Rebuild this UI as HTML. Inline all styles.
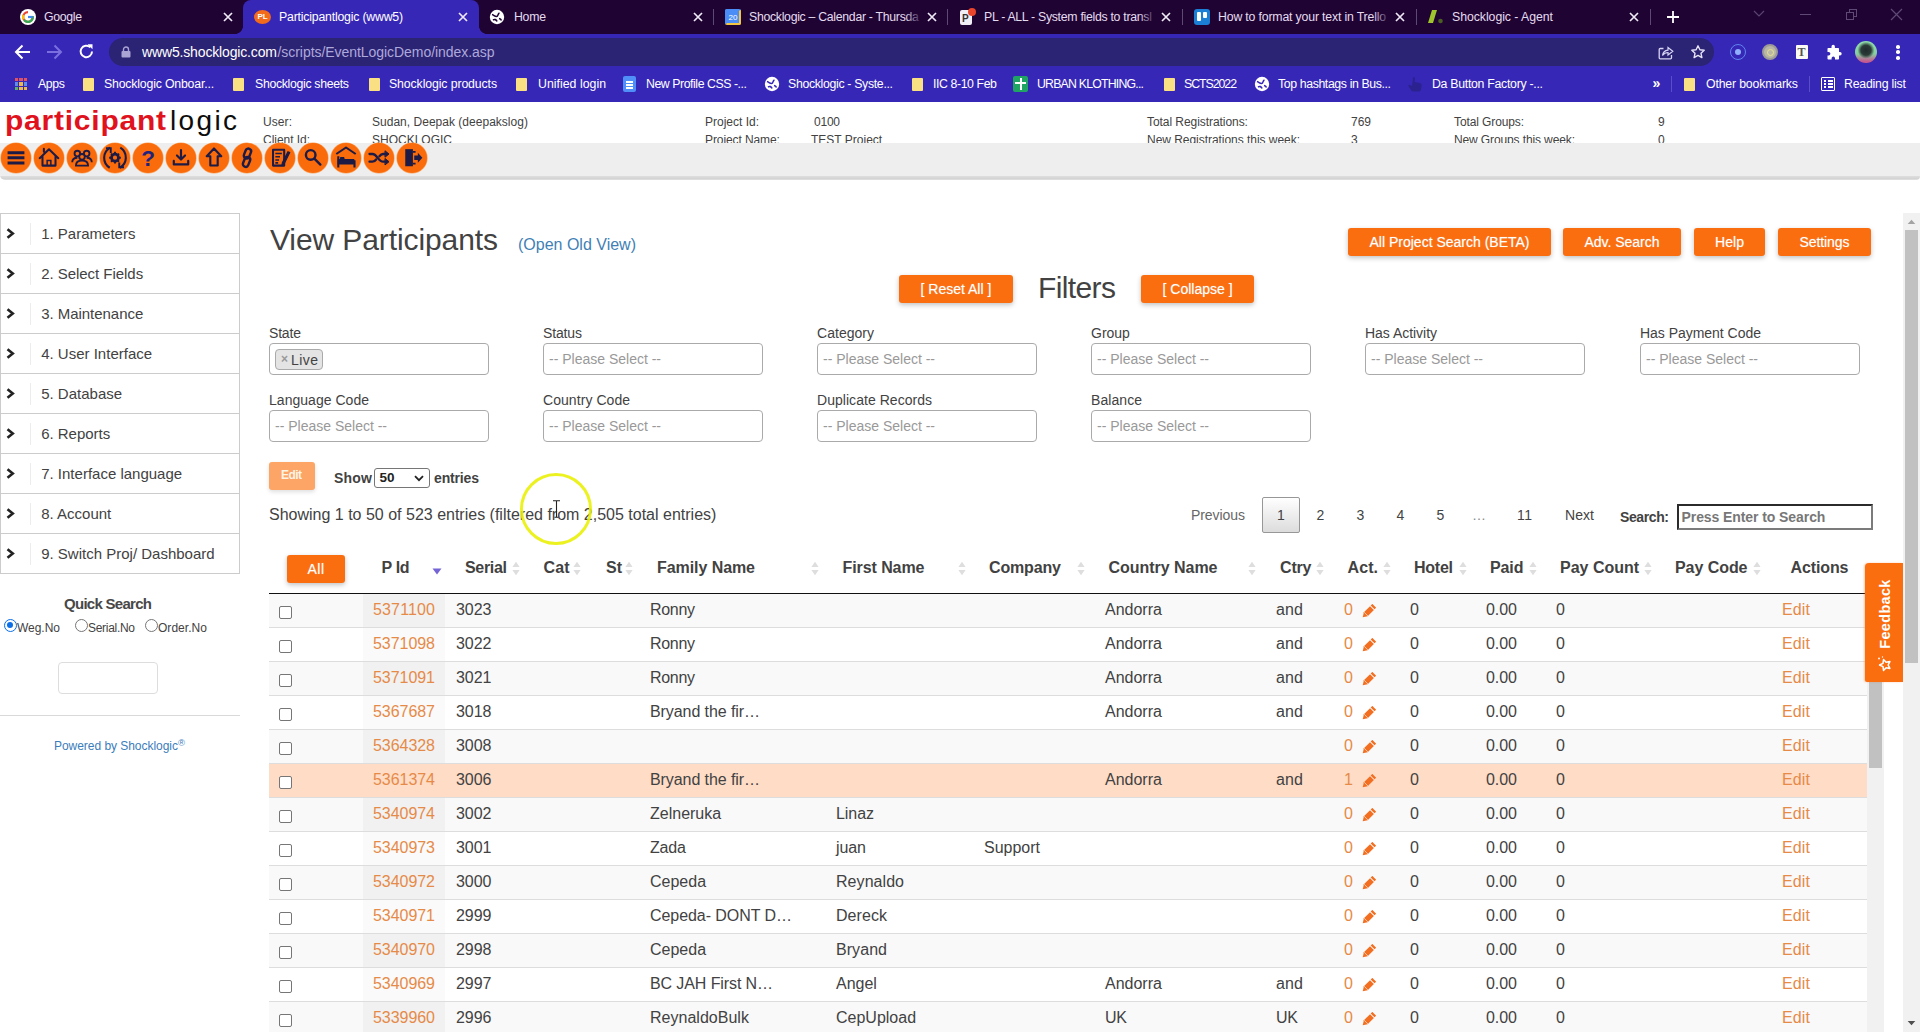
<!DOCTYPE html>
<html lang="en">
<head>
<meta charset="utf-8">
<title>Participantlogic (www5)</title>
<style>
*{box-sizing:border-box;margin:0;padding:0}
html,body{width:1920px;height:1032px;overflow:hidden;background:#fff}
body{font-family:"Liberation Sans",Arial,sans-serif;color:#333;position:relative}
.abs{position:absolute}
.t{position:absolute;white-space:nowrap;display:block}
/* browser chrome */
#tabbar{position:absolute;left:0;top:0;width:1920px;height:34px;background:#1f0333}
.atab{position:absolute;left:243px;top:0;width:236px;height:34px;background:#3727b7;border-radius:8px 8px 0 0}
#toolbar{position:absolute;left:0;top:34px;width:1920px;height:68px;background:#3727b7}
.tsep{position:absolute;top:9px;width:1px;height:16px;background:#5d4a73}
.fav{position:absolute;top:9px;width:16px;height:16px;border-radius:50%}
#omni{position:absolute;left:109px;top:4px;width:1605px;height:28px;border-radius:14px;background:#2b2373}
.fold{position:absolute;top:44px;width:11px;height:13px;background:#fbe083;border-radius:1px}
/* app header */
#hdr{position:absolute;left:0;top:102px;width:1920px;height:41px;background:#fff;overflow:hidden}
#iconbar{position:absolute;left:0;top:143px;width:1920px;height:37px;background:linear-gradient(#eee 0,#eee 33px,#dcdcdc 33.5px,#d2d2d2 36px,#e8e8e8 37px);border-radius:0 0 4px 5px}
.ic{position:absolute;top:0;width:30px;height:30px;border-radius:50%;background:#f96b0b;box-shadow:0 0 0 .6px #fca562}
.ic svg{position:absolute;left:0;top:0;width:30px;height:30px}
/* sidebar */
#side{position:absolute;left:0;top:213px;width:240px;height:361px;border-top:1px solid #ccc;border-right:1px solid #ccc;border-left:1px solid #ccc}
.si{position:absolute;left:0;width:238px;height:40px;border-bottom:1px solid #ccc}
.si .chev{position:absolute;left:5px;top:14px}
.si i{position:absolute;left:29px;top:9px;width:1px;height:22px;background:#ececec}
.rad{position:absolute;width:13px;height:13px;border-radius:50%;border:1px solid #767676;background:#fff}
.rad.on{border:1.500px solid #0a6fe8}
.rad.on:after{content:"";position:absolute;left:2px;top:2px;width:6px;height:6px;border-radius:50%;background:#0a6fe8}
/* main */
.btn{position:absolute;border-radius:3px;box-shadow:0 2px 5px rgba(0,0,0,.24)}
.bt{text-shadow:0 0 1px rgba(255,255,255,.5)}
.sel{position:absolute;width:220px;height:32px;border:1px solid #aaa;border-radius:4px;background:#fff}
/* table */
.tr{position:absolute;left:269px;width:1598px;height:34px;border-bottom:1px solid #ddd}
.tr .sc{position:absolute;left:93.500px;top:0;width:82px;height:33px}
.tr .cb{position:absolute;left:10px;top:12px;width:13px;height:13px;border:1px solid #767676;border-radius:2px;background:#fff}

</style>
</head>
<body>
<div id="tabbar">
<div class="atab"></div><div class="abs" style="left:235px;top:26px;width:8px;height:8px;background:radial-gradient(circle at 0 0,transparent 7.600px,#3727b7 8.200px)"></div><div class="abs" style="left:479px;top:26px;width:8px;height:8px;background:radial-gradient(circle at 100% 0,transparent 7.600px,#3727b7 8.200px)"></div>
<span id="f1" class="t tabt" style="left:44px;top:9px;font-size:12.3px;line-height:16px;color:#e4dcef;letter-spacing:-0.33px;">Google</span>
<span id="f2" class="t tabt" style="left:279px;top:9px;font-size:12.3px;line-height:16px;color:#fff;letter-spacing:-0.20px;">Participantlogic (www5)</span>
<span id="f3" class="t tabt" style="left:514px;top:9px;font-size:12.3px;line-height:16px;color:#e4dcef;letter-spacing:-0.27px;">Home</span>
<span id="f4" class="t tabt" style="left:749px;top:9px;font-size:12.3px;line-height:16px;color:#e4dcef;letter-spacing:-0.30px;">Shocklogic – Calendar - Thursda</span>
<span id="f5" class="t tabt" style="left:984px;top:9px;font-size:12.3px;line-height:16px;color:#e4dcef;letter-spacing:-0.29px;">PL - ALL - System fields to transl</span>
<span id="f6" class="t tabt" style="left:1218px;top:9px;font-size:12.3px;line-height:16px;color:#e4dcef;letter-spacing:-0.17px;">How to format your text in Trello</span>
<span id="f7" class="t tabt" style="left:1452px;top:9px;font-size:12.3px;line-height:16px;color:#e4dcef;letter-spacing:-0.05px;">Shocklogic - Agent</span>
<svg class="abs" style="left:223px;top:12px" width="10" height="10" viewBox="0 0 10 10"><path d="M1 1L9 9M9 1L1 9" stroke="#efe9f6" stroke-width="1.7" fill="none"/></svg>
<svg class="abs" style="left:458px;top:12px" width="10" height="10" viewBox="0 0 10 10"><path d="M1 1L9 9M9 1L1 9" stroke="#efe9f6" stroke-width="1.7" fill="none"/></svg>
<svg class="abs" style="left:693px;top:12px" width="10" height="10" viewBox="0 0 10 10"><path d="M1 1L9 9M9 1L1 9" stroke="#efe9f6" stroke-width="1.7" fill="none"/></svg>
<svg class="abs" style="left:927px;top:12px" width="10" height="10" viewBox="0 0 10 10"><path d="M1 1L9 9M9 1L1 9" stroke="#efe9f6" stroke-width="1.7" fill="none"/></svg>
<svg class="abs" style="left:1161px;top:12px" width="10" height="10" viewBox="0 0 10 10"><path d="M1 1L9 9M9 1L1 9" stroke="#efe9f6" stroke-width="1.7" fill="none"/></svg>
<svg class="abs" style="left:1395px;top:12px" width="10" height="10" viewBox="0 0 10 10"><path d="M1 1L9 9M9 1L1 9" stroke="#efe9f6" stroke-width="1.7" fill="none"/></svg>
<svg class="abs" style="left:1629px;top:12px" width="10" height="10" viewBox="0 0 10 10"><path d="M1 1L9 9M9 1L1 9" stroke="#efe9f6" stroke-width="1.7" fill="none"/></svg>
<div class="tsep" style="left:713px"></div>
<div class="tsep" style="left:947px"></div>
<div class="tsep" style="left:1182px"></div>
<div class="tsep" style="left:1416px"></div>
<div class="tsep" style="left:1650px"></div>
<div class="abs" style="left:905px;top:6px;width:18px;height:22px;background:linear-gradient(90deg,rgba(31,3,51,0),#1f0333)"></div>
<div class="abs" style="left:1139px;top:6px;width:18px;height:22px;background:linear-gradient(90deg,rgba(31,3,51,0),#1f0333)"></div>
<div class="abs" style="left:1373px;top:6px;width:18px;height:22px;background:linear-gradient(90deg,rgba(31,3,51,0),#1f0333)"></div>
<div class="fav" style="left:20px;background:#fff"></div><svg class="abs" style="left:22px;top:11px" width="12" height="12" viewBox="0 0 12 12"><path d="M6 1.2A4.8 4.8 0 1 0 10.8 6" fill="none" stroke="#ea4335" stroke-width="2.2"/><path d="M2.2 9A4.8 4.8 0 0 0 10.8 6H6" fill="none" stroke="#34a853" stroke-width="2.2"/><path d="M6 6H10.8" stroke="#4285f4" stroke-width="2.2"/><path d="M1.6 4A4.8 4.8 0 0 0 1.6 8.2" fill="none" stroke="#fbbc05" stroke-width="2.2"/></svg>
<div class="abs" style="left:254px;top:10px;width:17px;height:14px;border-radius:50%;background:#f26a1b"></div>
<span id="f8" class="t " style="left:257.5px;top:12px;font-size:8px;line-height:10px;color:#fff;font-weight:bold;">PL</span>
<svg class="abs" style="left:489px;top:9px" width="16" height="16" viewBox="0 0 16 16"><circle cx="8" cy="8" r="7.2" fill="#fff"/><path d="M3 5.5c2 .5 2.500 2 4.500 2s1-3 3-3.500M4 11c1.500-1 3.500-.5 4 1.500M10 9.500c1 .2 2 .8 2.500 2" stroke="#1f0333" stroke-width="1.600" fill="none"/></svg>
<div class="abs" style="left:725px;top:9px;width:16px;height:16px;border-radius:2px;background:#4a8df6;border:2px solid #f4c542;border-top-color:#4a8df6;border-left-color:#4a8df6"></div>
<span id="f9" class="t " style="left:728.5px;top:12.5px;font-size:8px;line-height:10px;color:#fff;">20</span>
<div class="abs" style="left:960px;top:10px;width:12px;height:15px;border-radius:2px;background:#f2eef6"></div><div class="abs" style="left:968px;top:8px;width:8px;height:8px;border-radius:50%;background:#e8452c"></div>
<span id="f10" class="t " style="left:962px;top:13px;font-size:10px;line-height:11px;color:#333;font-weight:bold;">P</span>
<div class="abs" style="left:1194px;top:9px;width:16px;height:16px;border-radius:3px;background:#1b7fd6"></div><div class="abs" style="left:1197px;top:12px;width:4px;height:9px;background:#fff;border-radius:1px"></div><div class="abs" style="left:1203px;top:12px;width:4px;height:6px;background:#fff;border-radius:1px"></div>
<svg class="abs" style="left:1427px;top:9px" width="17" height="16" viewBox="0 0 17 16"><path d="M5 1h5l-4 13H1z" fill="#9fc42c"/><circle cx="13.500" cy="12" r="2.300" fill="#4b5d20"/></svg>
<svg class="abs" style="left:1666px;top:10px" width="14" height="14" viewBox="0 0 14 14"><path d="M7 1V13M1 7H13" stroke="#fff" stroke-width="1.800"/></svg>
<svg class="abs" style="left:1752px;top:9px" width="14" height="10" viewBox="0 0 14 10"><path d="M2 2L7 7L12 2" stroke="#5a4470" stroke-width="1.200" fill="none"/></svg>
<div class="abs" style="left:1800px;top:14px;width:11px;height:1px;background:#5e4a74"></div>
<div class="abs" style="left:1849px;top:9px;width:8px;height:8px;border:1px solid #5e4a74"></div><div class="abs" style="left:1846px;top:12px;width:8px;height:8px;border:1px solid #5e4a74;background:#1f0333"></div>
<svg class="abs" style="left:1890px;top:8px" width="13" height="13" viewBox="0 0 13 13"><path d="M1 1L12 12M12 1L1 12" stroke="#5e4a74" stroke-width="1.200"/></svg>
</div>
<div id="toolbar">
<svg class="abs" style="left:14px;top:10px" width="17" height="16" viewBox="0 0 17 16"><path d="M8.500 1.500L2 8l6.500 6.500M2.300 8H16" stroke="#fff" stroke-width="2" fill="none"/></svg>
<svg class="abs" style="left:46px;top:10px" width="17" height="16" viewBox="0 0 17 16"><path d="M8.500 1.500L15 8l-6.500 6.500M14.700 8H1" stroke="#7b6fe0" stroke-width="2" fill="none"/></svg>
<svg class="abs" style="left:78px;top:9px" width="17" height="17" viewBox="0 0 17 17"><path d="M14 8.500A5.700 5.700 0 1 1 12.300 4.400" stroke="#fff" stroke-width="2" fill="none"/><path d="M9.500 1.200h5v5z" fill="#fff"/></svg>
<div id="omni">
<svg class="abs" style="left:12px;top:8px" width="10" height="12" viewBox="0 0 10 12"><rect x=".5" y="5" width="9" height="6.500" rx="1" fill="#a9a4d4"/><path d="M2.500 5V3.500a2.500 2.500 0 0 1 5 0V5" stroke="#a9a4d4" stroke-width="1.400" fill="none"/></svg>
<span id="f11" class="t " style="left:33px;top:5px;font-size:14px;line-height:18px;color:#fff;letter-spacing:-0.15px;">www5.shocklogic.com</span>
<span id="f12" class="t " style="left:168.5px;top:5px;font-size:14px;line-height:18px;color:#aea9dc;letter-spacing:-0.05px;">/scripts/EventLogicDemo/index.asp</span>
<svg class="abs" style="left:1549px;top:7px" width="16" height="15" viewBox="0 0 16 15"><path d="M5.500 3.500H2.200a1 1 0 0 0-1 1v8.300a1 1 0 0 0 1 1h10.300a1 1 0 0 0 1-1V10" stroke="#d8d4f4" stroke-width="1.300" fill="none"/><path d="M4.500 10.500c.5-3.500 2.500-5 5.500-5.300V2.500L14.800 6.300 10 10V7.500c-2.500 0-4 .8-5.500 3z" stroke="#d8d4f4" stroke-width="1.200" fill="none"/></svg>
<svg class="abs" style="left:1581px;top:6px" width="16" height="16" viewBox="0 0 16 16"><path d="M8 1.800l1.900 4 4.300.500-3.200 3 .9 4.300L8 11.400 4.100 13.600 5 9.300l-3.200-3 4.300-.5z" stroke="#e6e3f8" stroke-width="1.400" fill="none" stroke-linejoin="round"/></svg>
</div>
<div class="abs" style="left:1730px;top:10px;width:16px;height:16px;border-radius:50%;border:1.500px solid #5f86ee"></div><div class="abs" style="left:1735px;top:15px;width:6px;height:6px;border-radius:50%;background:#8fb0ff"></div>
<div class="abs" style="left:1762px;top:10px;width:16px;height:16px;border-radius:50%;background:#b9b7a8;border:2px solid #9d9b95"></div><div class="abs" style="left:1766.500px;top:14.500px;width:7px;height:7px;border-radius:50%;border:1.500px solid #e9e38c"></div>
<div class="abs" style="left:1796px;top:11px;width:12px;height:14px;background:#fbfbf6;border-radius:1px"></div>
<span id="f13" class="t " style="left:1797.5px;top:11px;font-size:12px;line-height:14px;color:#555;font-weight:bold;font-family:'Liberation Serif',serif;">T</span>
<svg class="abs" style="left:1825px;top:10px" width="17" height="17" viewBox="0 0 17 17"><path d="M6.500 2.500a1.700 1.700 0 0 1 3.400 0V4h3.300a.8.800 0 0 1 .8.800V8h1a1.700 1.700 0 0 1 0 3.400h-1v3.300a.8.800 0 0 1-.8.800H10v-1.200a1.700 1.700 0 0 0-3.400 0v1.200H3.300a.8.800 0 0 1-.8-.8V11.500H3.700a1.700 1.700 0 0 0 0-3.400H2.500V4.800a.8.800 0 0 1 .8-.8h3.200z" fill="#fff"/></svg>
<div class="abs" style="left:1855px;top:7px;width:22px;height:22px;border-radius:50%;background:radial-gradient(circle at 50% 42%,#1f2b2b 0,#2b3b38 30%,rgba(60,90,80,0) 50%),linear-gradient(#8edcaa 0,#86d0a0 58%,#c45a90 92%)"></div>
<div class="abs" style="left:1896px;top:11px;width:3.500px;height:3.500px;border-radius:50%;background:#fff"></div>
<div class="abs" style="left:1896px;top:16px;width:3.500px;height:3.500px;border-radius:50%;background:#fff"></div>
<div class="abs" style="left:1896px;top:22px;width:3.500px;height:3.500px;border-radius:50%;background:#fff"></div>
<div class="abs" style="left:14.5px;top:43.5px;width:3.400px;height:3.400px;background:#e05263"></div>
<div class="abs" style="left:19.2px;top:43.5px;width:3.400px;height:3.400px;background:#e05263"></div>
<div class="abs" style="left:23.9px;top:43.5px;width:3.400px;height:3.400px;background:#e05263"></div>
<div class="abs" style="left:14.5px;top:48.2px;width:3.400px;height:3.400px;background:#5b8def"></div>
<div class="abs" style="left:19.2px;top:48.2px;width:3.400px;height:3.400px;background:#e9b94a"></div>
<div class="abs" style="left:23.9px;top:48.2px;width:3.400px;height:3.400px;background:#5b8def"></div>
<div class="abs" style="left:14.5px;top:52.9px;width:3.400px;height:3.400px;background:#57b56a"></div>
<div class="abs" style="left:19.2px;top:52.9px;width:3.400px;height:3.400px;background:#e9b94a"></div>
<div class="abs" style="left:23.9px;top:52.9px;width:3.400px;height:3.400px;background:#e9b94a"></div>
<span id="f14" class="t " style="left:38px;top:42px;font-size:12.3px;line-height:16px;color:#fff;letter-spacing:-0.34px;">Apps</span>
<span id="f15" class="t " style="left:104px;top:42px;font-size:12.3px;line-height:16px;color:#fff;letter-spacing:-0.18px;">Shocklogic Onboar...</span>
<span id="f16" class="t " style="left:255px;top:42px;font-size:12.3px;line-height:16px;color:#fff;letter-spacing:-0.32px;">Shocklogic sheets</span>
<span id="f17" class="t " style="left:389px;top:42px;font-size:12.3px;line-height:16px;color:#fff;letter-spacing:-0.11px;">Shocklogic products</span>
<span id="f18" class="t " style="left:538px;top:42px;font-size:12.3px;line-height:16px;color:#fff;letter-spacing:0.03px;">Unified login</span>
<span id="f19" class="t " style="left:646px;top:42px;font-size:12.3px;line-height:16px;color:#fff;letter-spacing:-0.44px;">New Profile CSS -...</span>
<span id="f20" class="t " style="left:788px;top:42px;font-size:12.3px;line-height:16px;color:#fff;letter-spacing:-0.32px;">Shocklogic - Syste...</span>
<span id="f21" class="t " style="left:933px;top:42px;font-size:12.3px;line-height:16px;color:#fff;letter-spacing:-0.40px;">IIC 8-10 Feb</span>
<span id="f22" class="t " style="left:1037px;top:42px;font-size:12.3px;line-height:16px;color:#fff;letter-spacing:-0.79px;">URBAN KLOTHING...</span>
<span id="f23" class="t " style="left:1184px;top:42px;font-size:12.3px;line-height:16px;color:#fff;letter-spacing:-1.02px;">SCTS2022</span>
<span id="f24" class="t " style="left:1278px;top:42px;font-size:12.3px;line-height:16px;color:#fff;letter-spacing:-0.38px;">Top hashtags in Bus...</span>
<span id="f25" class="t " style="left:1432px;top:42px;font-size:12.3px;line-height:16px;color:#fff;letter-spacing:-0.28px;">Da Button Factory -...</span>
<span id="f26" class="t " style="left:1706px;top:42px;font-size:12.3px;line-height:16px;color:#fff;letter-spacing:-0.17px;">Other bookmarks</span>
<span id="f27" class="t " style="left:1844px;top:42px;font-size:12.3px;line-height:16px;color:#fff;letter-spacing:-0.21px;">Reading list</span>
<div class="fold" style="left:83px"></div>
<div class="fold" style="left:233px"></div>
<div class="fold" style="left:369px"></div>
<div class="fold" style="left:516px"></div>
<div class="fold" style="left:912px"></div>
<div class="fold" style="left:1164px"></div>
<div class="fold" style="left:1684px"></div>
<div class="abs" style="left:623px;top:42px;width:13px;height:16px;border-radius:2px;background:#4f8ff7"></div>
<div class="abs" style="left:626px;top:47px;width:7px;height:1.500px;background:#fff"></div>
<div class="abs" style="left:626px;top:50px;width:7px;height:1.500px;background:#fff"></div>
<div class="abs" style="left:626px;top:53px;width:7px;height:1.500px;background:#fff"></div>
<svg class="abs" style="left:764px;top:42px" width="16" height="16" viewBox="0 0 16 16"><circle cx="8" cy="8" r="7.200" fill="#fff"/><path d="M3 5.500c2 .5 2.500 2 4.500 2s1-3 3-3.500M4 11c1.500-1 3.500-.5 4 1.500M10 9.500c1 .2 2 .8 2.500 2" stroke="#3727b7" stroke-width="1.600" fill="none"/></svg>
<svg class="abs" style="left:1254px;top:42px" width="16" height="16" viewBox="0 0 16 16"><circle cx="8" cy="8" r="7.200" fill="#fff"/><path d="M3 5.500c2 .5 2.500 2 4.500 2s1-3 3-3.500M4 11c1.500-1 3.500-.5 4 1.500M10 9.500c1 .2 2 .8 2.500 2" stroke="#3727b7" stroke-width="1.600" fill="none"/></svg>
<div class="abs" style="left:1013px;top:42px;width:15px;height:16px;border-radius:2px;background:#1fa463"></div><div class="abs" style="left:1019.500px;top:44px;width:2px;height:12px;background:#fff"></div><div class="abs" style="left:1015px;top:48px;width:11px;height:2px;background:#fff"></div>
<svg class="abs" style="left:1407px;top:41px" width="17" height="18" viewBox="0 0 17 18"><path d="M6 2.500c1.200-.8 2.200.2 2 1.500L7.600 7l5.200 1c1.500.4 2 1.400 1.800 2.800l-.6 3.700c-.2 1.300-1 2-2.300 2H6.500c-1 0-1.800-.4-2.400-1.300L1.600 11.500c-.6-1 .3-2 1.400-1.600l2 1z" fill="#2b2290"/></svg>
<span id="f28" class="t " style="left:1652.5px;top:40px;font-size:14px;line-height:18px;color:#fff;font-weight:bold;">»</span>
<div class="abs" style="left:1671px;top:42px;width:1px;height:16px;background:#5a4fc8"></div>
<div class="abs" style="left:1809px;top:42px;width:1px;height:16px;background:#5a4fc8"></div>
<div class="abs" style="left:1821px;top:43px;width:14px;height:14px;border:1.500px solid #fff;border-radius:1px"></div>
<div class="abs" style="left:1824px;top:46px;width:2px;height:1.500px;background:#fff"></div><div class="abs" style="left:1827.500px;top:46px;width:5px;height:1.500px;background:#fff"></div>
<div class="abs" style="left:1824px;top:49.2px;width:2px;height:1.500px;background:#fff"></div><div class="abs" style="left:1827.500px;top:49.2px;width:5px;height:1.500px;background:#fff"></div>
<div class="abs" style="left:1824px;top:52.4px;width:2px;height:1.500px;background:#fff"></div><div class="abs" style="left:1827.500px;top:52.4px;width:5px;height:1.500px;background:#fff"></div>
</div>
<div id="hdr">
<span id="f29" class="t lg" style="left:5px;top:1.3px;font-size:28px;line-height:36px;color:#e0121d;font-weight:bold;transform:scaleX(1.07);transform-origin:0 50%;letter-spacing:0.73px;">participant</span>
<span id="f30" class="t lg" style="left:170px;top:1.3px;font-size:28px;line-height:36px;color:#0d0d0d;letter-spacing:2.35px;">logic</span>
<span id="f31" class="t " style="left:263px;top:13px;font-size:12px;line-height:14px;color:#424242;letter-spacing:0.08px;">User:</span>
<span id="f32" class="t " style="left:372px;top:13px;font-size:12px;line-height:14px;color:#424242;letter-spacing:0.02px;">Sudan, Deepak (deepakslog)</span>
<span id="f33" class="t " style="left:705px;top:13px;font-size:12px;line-height:14px;color:#424242;">Project Id:</span>
<span id="f34" class="t " style="left:814px;top:13px;font-size:12px;line-height:14px;color:#424242;letter-spacing:-0.23px;">0100</span>
<span id="f35" class="t " style="left:1147px;top:13px;font-size:12px;line-height:14px;color:#424242;letter-spacing:-0.06px;">Total Registrations:</span>
<span id="f36" class="t " style="left:1351px;top:13px;font-size:12px;line-height:14px;color:#424242;">769</span>
<span id="f37" class="t " style="left:1454px;top:13px;font-size:12px;line-height:14px;color:#424242;letter-spacing:-0.11px;">Total Groups:</span>
<span id="f38" class="t " style="left:1658px;top:13px;font-size:12px;line-height:14px;color:#424242;">9</span>
<span id="f39" class="t " style="left:263px;top:31px;font-size:12px;line-height:14px;color:#424242;letter-spacing:-0.04px;">Client Id:</span>
<span id="f40" class="t " style="left:372px;top:31px;font-size:12px;line-height:14px;color:#424242;">SHOCKLOGIC</span>
<span id="f41" class="t " style="left:705px;top:31px;font-size:12px;line-height:14px;color:#424242;letter-spacing:-0.09px;">Project Name:</span>
<span id="f42" class="t " style="left:811px;top:31px;font-size:12px;line-height:14px;color:#424242;">TEST Project</span>
<span id="f43" class="t " style="left:1147px;top:31px;font-size:12px;line-height:14px;color:#424242;letter-spacing:-0.04px;">New Registrations this week:</span>
<span id="f44" class="t " style="left:1351px;top:31px;font-size:12px;line-height:14px;color:#424242;">3</span>
<span id="f45" class="t " style="left:1454px;top:31px;font-size:12px;line-height:14px;color:#424242;letter-spacing:-0.12px;">New Groups this week:</span>
<span id="f46" class="t " style="left:1658px;top:31px;font-size:12px;line-height:14px;color:#424242;">0</span>
</div>
<div id="iconbar">
<div class="ic" style="left:1px"><svg viewBox="1 1 30 30"><g transform="translate(16 15.700) scale(1) translate(-16 -16)"><path d="M7.600 11h16.800M7.600 16h16.800M7.600 21.200h16.800" stroke="#1d1b45" stroke-width="3"/></g></svg></div>
<div class="ic" style="left:34px"><svg viewBox="1 1 30 30"><g transform="translate(16 15.700) scale(0.93) translate(-16 -16)"><path d="M6 16.500L16 7l10 9.500M9 14.500V24.500h14V14.500M10.500 9.500V6.500" stroke="#1d1b45" stroke-width="2.200" fill="none" stroke-linejoin="round" stroke-linecap="round"/><path d="M14 24v-5h4v5" stroke="#1d1b45" stroke-width="1.600" fill="none"/></g></svg></div>
<div class="ic" style="left:67px"><svg viewBox="1 1 30 30"><g transform="translate(16 15.700) scale(0.93) translate(-16 -16)"><g fill="none" stroke="#1d1b45" stroke-width="2"><circle cx="11" cy="11.500" r="3"/><circle cx="21" cy="11.500" r="3"/><circle cx="16" cy="15" r="3" fill="#f96b0b"/><path d="M5.500 21c0-3.500 2.500-5 5.500-5M26.500 21c0-3.500-2.500-5-5.500-5M9.500 24.500c0-4 3-5.500 6.500-5.500s6.500 1.500 6.500 5.500z" fill="#f96b0b"/></g></g></svg></div>
<div class="ic" style="left:100px"><svg viewBox="1 1 30 30"><g transform="translate(16 15.700) scale(1.06) translate(-16 -16)"><g fill="none" stroke="#1d1b45" stroke-width="2"><path d="M11.500 6.500A11 11 0 0 0 11 25.500M20.500 25.500A11 11 0 0 0 21 6.500"/><path d="M7.500 7h4.500v4.500M24.500 25h-4.500v-4.500" stroke-width="1.800"/><circle cx="16" cy="16" r="3.300" stroke-width="2.600"/><path d="M16 10.500v2M16 19.500v2M10.500 16h2M19.500 16h2M12.200 12.200l1.300 1.300M18.500 18.500l1.300 1.300M12.200 19.800l1.300-1.300M18.500 13.500l1.300-1.300" stroke-width="1.800"/></g></g></svg></div>
<div class="ic" style="left:133px"><svg viewBox="1 1 30 30"><g transform="translate(16 15.700) scale(1) translate(-16 -16)"><text x="16" y="24.500" text-anchor="middle" font-family="Liberation Sans,Arial,sans-serif" font-weight="bold" font-size="22.500" fill="#22227c">?</text></g></svg></div>
<div class="ic" style="left:166px"><svg viewBox="1 1 30 30"><g transform="translate(16 15.700) scale(0.9) translate(-16 -16)"><g fill="none" stroke="#1d1b45" stroke-width="2.400" stroke-linecap="round" stroke-linejoin="round"><path d="M16 7.500v10M11.500 13.500l4.500 4.500 4.500-4.500"/><path d="M8 19.500v4h16v-4"/></g></g></svg></div>
<div class="ic" style="left:199px"><svg viewBox="1 1 30 30"><g transform="translate(16 15.700) scale(0.97) translate(-16 -16)"><path d="M16 6.500l7.500 8h-3.700v9.500h-7.600v-9.500H8.500z" fill="none" stroke="#1d1b45" stroke-width="2.200" stroke-linejoin="round"/></g></svg></div>
<div class="ic" style="left:232px"><svg viewBox="1 1 30 30"><g transform="translate(16 15.700) scale(0.93) translate(-16 -16)"><g fill="none" stroke="#1d1b45" stroke-width="2.600" stroke-linecap="round"><rect x="13.500" y="6" width="6" height="11" rx="3" transform="rotate(22 16.500 11.500)"/><rect x="12.500" y="15" width="6" height="11" rx="3" transform="rotate(22 15.500 20.500)"/></g></g></svg></div>
<div class="ic" style="left:265px"><svg viewBox="1 1 30 30"><g transform="translate(16 15.700) scale(0.93) translate(-16 -16)"><g fill="none" stroke="#1d1b45" stroke-width="2.200" stroke-linejoin="round"><path d="M8.500 7.500h12v17h-12z"/><path d="M11 11.500h7M11 15h5M11 18.500h4M11 21.500h3" stroke-width="1.800"/><path d="M24.500 9.500l-6 12-.5 3 2.500-2 6-12z" fill="#1d1b45" stroke-width="1.200"/></g></g></svg></div>
<div class="ic" style="left:298px"><svg viewBox="1 1 30 30"><g transform="translate(16 15.700) scale(0.92) translate(-16 -16)"><g fill="none" stroke="#1d1b45" stroke-width="2.600" stroke-linecap="round"><circle cx="13.500" cy="13" r="5.200"/><path d="M17.500 17l6.500 6.500"/></g></g></svg></div>
<div class="ic" style="left:331px"><svg viewBox="1 1 30 30"><g transform="translate(16 15.700) scale(1) translate(-16 -16)"><g fill="none" stroke="#1d1b45" stroke-width="2.100" stroke-linejoin="round"><path d="M6.300 12.300L16 5.800l9.700 6.500"/><path d="M8.300 14.500v11.300M24.500 18.500v7.300"/><path d="M8.300 18h15.500v4.300H8.300z" fill="#1d1b45" stroke-width="1.200"/><path d="M10.500 15.800h3.500v2h-3.500z" fill="#1d1b45" stroke-width="1"/></g></g></svg></div>
<div class="ic" style="left:364px"><svg viewBox="1 1 30 30"><g transform="translate(16 15.700) scale(1) translate(-16 -16)"><g fill="none" stroke="#1d1b45" stroke-width="2.300" stroke-linecap="round" stroke-linejoin="round"><path d="M6.500 12.300h3c4.500 0 6 7.700 10.500 7.700h3M6.500 20h3c1.600 0 2.700-.9 3.600-2.200M16.400 14.500c1-1.300 2.100-2.200 3.600-2.200h3"/><path d="M22.300 9.300l3.700 3-3.700 3zM22.300 17l3.700 3-3.700 3z" fill="#1d1b45" stroke-width="1"/></g></g></svg></div>
<div class="ic" style="left:397px"><svg viewBox="1 1 30 30"><g transform="translate(16 15.700) scale(0.9) translate(-16 -16)"><g><path d="M8.500 6.500h8.500v19h-8.500z" fill="#1d1b45"/><path d="M17 9.500h3M17 22.500h3" stroke="#1d1b45" stroke-width="2"/><path d="M18.500 13.500h4v-3l5 5.500-5 5.500v-3h-4z" fill="#1d1b45"/></g></g></svg></div>
</div>
<div id="side">
<div class="si" style="top:0px"><svg class="chev" width="9" height="11" viewBox="0 0 9 11"><path d="M1.500 1.200L6.800 5.500L1.500 9.800" stroke="#222" stroke-width="2.600" fill="none"/></svg><i></i><span id="f47" class="t " style="left:40.2px;top:11px;font-size:15px;line-height:18px;color:#424242;">1. Parameters</span></div>
<div class="si" style="top:40px"><svg class="chev" width="9" height="11" viewBox="0 0 9 11"><path d="M1.500 1.200L6.800 5.500L1.500 9.800" stroke="#222" stroke-width="2.600" fill="none"/></svg><i></i><span id="f48" class="t " style="left:40.2px;top:11px;font-size:15px;line-height:18px;color:#424242;letter-spacing:-0.04px;">2. Select Fields</span></div>
<div class="si" style="top:80px"><svg class="chev" width="9" height="11" viewBox="0 0 9 11"><path d="M1.500 1.200L6.800 5.500L1.500 9.800" stroke="#222" stroke-width="2.600" fill="none"/></svg><i></i><span id="f49" class="t " style="left:40.2px;top:11px;font-size:15px;line-height:18px;color:#424242;letter-spacing:-0.04px;">3. Maintenance</span></div>
<div class="si" style="top:120px"><svg class="chev" width="9" height="11" viewBox="0 0 9 11"><path d="M1.500 1.200L6.800 5.500L1.500 9.800" stroke="#222" stroke-width="2.600" fill="none"/></svg><i></i><span id="f50" class="t " style="left:40.2px;top:11px;font-size:15px;line-height:18px;color:#424242;">4. User Interface</span></div>
<div class="si" style="top:160px"><svg class="chev" width="9" height="11" viewBox="0 0 9 11"><path d="M1.500 1.200L6.800 5.500L1.500 9.800" stroke="#222" stroke-width="2.600" fill="none"/></svg><i></i><span id="f51" class="t " style="left:40.2px;top:11px;font-size:15px;line-height:18px;color:#424242;">5. Database</span></div>
<div class="si" style="top:200px"><svg class="chev" width="9" height="11" viewBox="0 0 9 11"><path d="M1.500 1.200L6.800 5.500L1.500 9.800" stroke="#222" stroke-width="2.600" fill="none"/></svg><i></i><span id="f52" class="t " style="left:40.2px;top:11px;font-size:15px;line-height:18px;color:#424242;letter-spacing:-0.02px;">6. Reports</span></div>
<div class="si" style="top:240px"><svg class="chev" width="9" height="11" viewBox="0 0 9 11"><path d="M1.500 1.200L6.800 5.500L1.500 9.800" stroke="#222" stroke-width="2.600" fill="none"/></svg><i></i><span id="f53" class="t " style="left:40.2px;top:11px;font-size:15px;line-height:18px;color:#424242;">7. Interface language</span></div>
<div class="si" style="top:280px"><svg class="chev" width="9" height="11" viewBox="0 0 9 11"><path d="M1.500 1.200L6.800 5.500L1.500 9.800" stroke="#222" stroke-width="2.600" fill="none"/></svg><i></i><span id="f54" class="t " style="left:40.2px;top:11px;font-size:15px;line-height:18px;color:#424242;">8. Account</span></div>
<div class="si" style="top:320px"><svg class="chev" width="9" height="11" viewBox="0 0 9 11"><path d="M1.500 1.200L6.800 5.500L1.500 9.800" stroke="#222" stroke-width="2.600" fill="none"/></svg><i></i><span id="f55" class="t " style="left:40.2px;top:11px;font-size:15px;line-height:18px;color:#424242;">9. Switch Proj/ Dashboard</span></div>
</div>
<span id="f56" class="t " style="left:64px;top:594px;font-size:15px;line-height:20px;color:#484848;font-weight:bold;letter-spacing:-0.72px;">Quick Search</span>
<div class="rad on" style="left:4px;top:619px"></div>
<div class="rad" style="left:75px;top:619px"></div>
<div class="rad" style="left:145px;top:619px"></div>
<span id="f57" class="t " style="left:17px;top:620px;font-size:12px;line-height:16px;color:#424242;letter-spacing:-0.03px;">Weg.No</span>
<span id="f58" class="t " style="left:88px;top:620px;font-size:12px;line-height:16px;color:#424242;letter-spacing:-0.29px;">Serial.No</span>
<span id="f59" class="t " style="left:158px;top:620px;font-size:12px;line-height:16px;color:#424242;letter-spacing:0.04px;">Order.No</span>
<div class="abs" style="left:58px;top:662px;width:100px;height:32px;border:1px solid #ddd;border-radius:4px;background:#fff"></div>
<div class="abs" style="left:0;top:715px;width:240px;height:1px;background:#d9d9d9"></div>
<span id="f60" class="t " style="left:54px;top:739px;font-size:12px;line-height:14px;color:#3b7dbb;letter-spacing:-0.04px;">Powered by Shocklogic</span>
<span id="f61" class="t " style="left:178px;top:738px;font-size:9.5px;line-height:10px;color:#3b7dbb;">®</span>
<span id="f62" class="t " style="left:270px;top:223px;font-size:30px;line-height:34px;color:#424242;letter-spacing:-0.10px;">View Participants</span>
<span id="f63" class="t " style="left:518px;top:236px;font-size:16px;line-height:18px;color:#3f7fb5;">(Open Old View)</span>
<div class="btn" style="left:1348px;top:228px;width:203px;height:28px;background:#fa6e10;"></div><span id="f64" class="t bt" style="left:1369.5px;top:233.5px;font-size:14px;line-height:16px;color:#fff;">All Project Search (BETA)</span>
<div class="btn" style="left:1563px;top:228px;width:118px;height:28px;background:#fa6e10;"></div><span id="f65" class="t bt" style="left:1584.5px;top:233.5px;font-size:14px;line-height:16px;color:#fff;letter-spacing:-0.02px;">Adv. Search</span>
<div class="btn" style="left:1694px;top:228px;width:71px;height:28px;background:#fa6e10;"></div><span id="f66" class="t bt" style="left:1715px;top:233.5px;font-size:14px;line-height:16px;color:#fff;letter-spacing:0.07px;">Help</span>
<div class="btn" style="left:1778px;top:228px;width:93px;height:28px;background:#fa6e10;"></div><span id="f67" class="t bt" style="left:1799.5px;top:233.5px;font-size:14px;line-height:16px;color:#fff;letter-spacing:-0.08px;">Settings</span>
<div class="btn" style="left:899px;top:275px;width:114px;height:28px;background:#fa6e10;"></div><span id="f68" class="t bt" style="left:920.5px;top:280.5px;font-size:14px;line-height:16px;color:#fff;">[ Reset All ]</span>
<span id="f69" class="t " style="left:1038px;top:270.5px;font-size:30px;line-height:34px;color:#424242;letter-spacing:-0.61px;">Filters</span>
<div class="btn" style="left:1141px;top:275px;width:113px;height:28px;background:#fa6e10;"></div><span id="f70" class="t bt" style="left:1162.5px;top:280.5px;font-size:14px;line-height:16px;color:#fff;">[ Collapse ]</span>
<span id="f71" class="t " style="left:269px;top:325px;font-size:14px;line-height:16px;color:#424242;letter-spacing:-0.18px;">State</span>
<div class="sel" style="left:269px;top:343px"></div>
<span id="f72" class="t " style="left:543px;top:325px;font-size:14px;line-height:16px;color:#424242;letter-spacing:-0.14px;">Status</span>
<div class="sel" style="left:543px;top:343px"></div>
<span id="f73" class="t " style="left:549px;top:351px;font-size:14px;line-height:16px;color:#999;">-- Please Select --</span>
<span id="f74" class="t " style="left:817px;top:325px;font-size:14px;line-height:16px;color:#424242;letter-spacing:0.03px;">Category</span>
<div class="sel" style="left:817px;top:343px"></div>
<span id="f75" class="t " style="left:823px;top:351px;font-size:14px;line-height:16px;color:#999;">-- Please Select --</span>
<span id="f76" class="t " style="left:1091px;top:325px;font-size:14px;line-height:16px;color:#424242;">Group</span>
<div class="sel" style="left:1091px;top:343px"></div>
<span id="f77" class="t " style="left:1097px;top:351px;font-size:14px;line-height:16px;color:#999;">-- Please Select --</span>
<span id="f78" class="t " style="left:1365px;top:325px;font-size:14px;line-height:16px;color:#424242;letter-spacing:-0.03px;">Has Activity</span>
<div class="sel" style="left:1365px;top:343px"></div>
<span id="f79" class="t " style="left:1371px;top:351px;font-size:14px;line-height:16px;color:#999;">-- Please Select --</span>
<span id="f80" class="t " style="left:1640px;top:325px;font-size:14px;line-height:16px;color:#424242;letter-spacing:-0.03px;">Has Payment Code</span>
<div class="sel" style="left:1640px;top:343px"></div>
<span id="f81" class="t " style="left:1646px;top:351px;font-size:14px;line-height:16px;color:#999;">-- Please Select --</span>
<span id="f82" class="t " style="left:269px;top:392px;font-size:14px;line-height:16px;color:#424242;letter-spacing:0.03px;">Language Code</span>
<div class="sel" style="left:269px;top:410px"></div>
<span id="f83" class="t " style="left:275px;top:418px;font-size:14px;line-height:16px;color:#999;">-- Please Select --</span>
<span id="f84" class="t " style="left:543px;top:392px;font-size:14px;line-height:16px;color:#424242;letter-spacing:0.06px;">Country Code</span>
<div class="sel" style="left:543px;top:410px"></div>
<span id="f85" class="t " style="left:549px;top:418px;font-size:14px;line-height:16px;color:#999;">-- Please Select --</span>
<span id="f86" class="t " style="left:817px;top:392px;font-size:14px;line-height:16px;color:#424242;letter-spacing:0.04px;">Duplicate Records</span>
<div class="sel" style="left:817px;top:410px"></div>
<span id="f87" class="t " style="left:823px;top:418px;font-size:14px;line-height:16px;color:#999;">-- Please Select --</span>
<span id="f88" class="t " style="left:1091px;top:392px;font-size:14px;line-height:16px;color:#424242;letter-spacing:0.07px;">Balance</span>
<div class="sel" style="left:1091px;top:410px"></div>
<span id="f89" class="t " style="left:1097px;top:418px;font-size:14px;line-height:16px;color:#999;">-- Please Select --</span>
<div class="abs" style="left:275px;top:349px;width:48px;height:21px;background:#e4e4e4;border:1px solid #aaa;border-radius:4px"></div>
<span id="f90" class="t " style="left:281px;top:351px;font-size:12px;line-height:16px;color:#999;font-weight:bold;">×</span>
<span id="f91" class="t " style="left:291px;top:351.5px;font-size:14px;line-height:16px;color:#424242;letter-spacing:0.44px;">Live</span>
<div class="btn" style="left:269px;top:462px;width:46px;height:27.500px;background:#fca566;box-shadow:0 2px 4px rgba(0,0,0,.13)"></div>
<span id="f92" class="t " style="left:281px;top:466.5px;font-size:12px;line-height:16px;color:#fff3e4;font-weight:bold;letter-spacing:-0.56px;">Edit</span>
<span id="f93" class="t " style="left:334px;top:470px;font-size:14px;line-height:16px;color:#424242;font-weight:bold;letter-spacing:0.22px;">Show</span>
<div class="abs" style="left:374px;top:468px;width:56px;height:20px;border:1px solid #767676;border-radius:3px;background:#fff"></div>
<span id="f94" class="t " style="left:379.5px;top:470px;font-size:13.5px;line-height:16px;color:#222;font-weight:bold;letter-spacing:-0.03px;">50</span>
<svg class="abs" style="left:414px;top:475px" width="10" height="7" viewBox="0 0 10 7"><path d="M1 1.200L5 5.200L9 1.200" stroke="#222" stroke-width="1.800" fill="none"/></svg>
<span id="f95" class="t " style="left:434px;top:470px;font-size:14px;line-height:16px;color:#424242;font-weight:bold;letter-spacing:-0.15px;">entries</span>
<span id="f96" class="t " style="left:269px;top:506px;font-size:16px;line-height:18px;color:#424242;">Showing 1 to 50 of 523 entries (filtered from 2,505 total entries)</span>
<span id="f97" class="t " style="left:1191px;top:507px;font-size:14px;line-height:16px;color:#666;letter-spacing:-0.07px;">Previous</span>
<div class="abs" style="left:1262px;top:497px;width:38px;height:36px;border:1px solid #979797;border-radius:2px;background:linear-gradient(#fff,#dcdcdc)"></div>
<span id="f98" class="t " style="left:1277px;top:507px;font-size:14px;line-height:16px;color:#424242;">1</span>
<span id="f99" class="t " style="left:1316.5px;top:507px;font-size:14px;line-height:16px;color:#424242;">2</span>
<span id="f100" class="t " style="left:1356.5px;top:507px;font-size:14px;line-height:16px;color:#424242;">3</span>
<span id="f101" class="t " style="left:1396.5px;top:507px;font-size:14px;line-height:16px;color:#424242;">4</span>
<span id="f102" class="t " style="left:1436.5px;top:507px;font-size:14px;line-height:16px;color:#424242;">5</span>
<span id="f103" class="t " style="left:1472px;top:507px;font-size:14px;line-height:16px;color:#888;">…</span>
<span id="f104" class="t " style="left:1517px;top:507px;font-size:14px;line-height:16px;color:#424242;letter-spacing:0.45px;">11</span>
<span id="f105" class="t " style="left:1565px;top:507px;font-size:14px;line-height:16px;color:#424242;letter-spacing:0.07px;">Next</span>
<span id="f106" class="t " style="left:1620px;top:509px;font-size:14px;line-height:16px;color:#424242;font-weight:bold;letter-spacing:-0.39px;">Search:</span>
<div class="abs" style="left:1677px;top:504px;width:196px;height:26px;border:2px solid;border-color:#2b2b2b #7b7b7b #7b7b7b #2b2b2b;background:#fff"></div>
<span id="f107" class="t " style="left:1681.5px;top:509px;font-size:14px;line-height:16px;color:#777;font-weight:bold;letter-spacing:-0.08px;">Press Enter to Search</span>
<div class="btn" style="left:287px;top:555px;width:58px;height:28px;background:#fa6e10"></div>
<span id="f108" class="t bt" style="left:307.5px;top:560.5px;font-size:14px;line-height:16px;color:#fff;letter-spacing:0.47px;">All</span>
<span id="f109" class="t " style="left:381.5px;top:559px;font-size:16px;line-height:18px;color:#424242;font-weight:bold;letter-spacing:-0.35px;">P Id</span>
<svg class="abs" style="left:432px;top:568px" width="10" height="7" viewBox="0 0 10 7"><path d="M0.500 .5h9L5 6.500z" fill="#7464d6"/></svg>
<span id="f110" class="t " style="left:465px;top:559px;font-size:16px;line-height:18px;color:#424242;font-weight:bold;letter-spacing:-0.32px;">Serial</span>
<svg class="abs" style="left:512px;top:561px" width="8" height="15" viewBox="0 0 8 15"><path d="M4 .8L7.600 6H.4z" fill="#dedede"/><path d="M4 14.200L7.600 9H.4z" fill="#dedede"/></svg>
<span id="f111" class="t " style="left:543.5px;top:559px;font-size:16px;line-height:18px;color:#424242;font-weight:bold;letter-spacing:0.11px;">Cat</span>
<svg class="abs" style="left:573px;top:561px" width="8" height="15" viewBox="0 0 8 15"><path d="M4 .8L7.600 6H.4z" fill="#dedede"/><path d="M4 14.200L7.600 9H.4z" fill="#dedede"/></svg>
<span id="f112" class="t " style="left:606px;top:559px;font-size:16px;line-height:18px;color:#424242;font-weight:bold;">St</span>
<svg class="abs" style="left:625px;top:561px" width="8" height="15" viewBox="0 0 8 15"><path d="M4 .8L7.600 6H.4z" fill="#dedede"/><path d="M4 14.200L7.600 9H.4z" fill="#dedede"/></svg>
<span id="f113" class="t " style="left:657px;top:559px;font-size:16px;line-height:18px;color:#424242;font-weight:bold;letter-spacing:-0.07px;">Family Name</span>
<svg class="abs" style="left:810.5px;top:561px" width="8" height="15" viewBox="0 0 8 15"><path d="M4 .8L7.600 6H.4z" fill="#dedede"/><path d="M4 14.200L7.600 9H.4z" fill="#dedede"/></svg>
<span id="f114" class="t " style="left:842.5px;top:559px;font-size:16px;line-height:18px;color:#424242;font-weight:bold;letter-spacing:-0.08px;">First Name</span>
<svg class="abs" style="left:957.5px;top:561px" width="8" height="15" viewBox="0 0 8 15"><path d="M4 .8L7.600 6H.4z" fill="#dedede"/><path d="M4 14.200L7.600 9H.4z" fill="#dedede"/></svg>
<span id="f115" class="t " style="left:989px;top:559px;font-size:16px;line-height:18px;color:#424242;font-weight:bold;letter-spacing:-0.15px;">Company</span>
<svg class="abs" style="left:1077px;top:561px" width="8" height="15" viewBox="0 0 8 15"><path d="M4 .8L7.600 6H.4z" fill="#dedede"/><path d="M4 14.200L7.600 9H.4z" fill="#dedede"/></svg>
<span id="f116" class="t " style="left:1108.5px;top:559px;font-size:16px;line-height:18px;color:#424242;font-weight:bold;letter-spacing:-0.03px;">Country Name</span>
<svg class="abs" style="left:1248px;top:561px" width="8" height="15" viewBox="0 0 8 15"><path d="M4 .8L7.600 6H.4z" fill="#dedede"/><path d="M4 14.200L7.600 9H.4z" fill="#dedede"/></svg>
<span id="f117" class="t " style="left:1280px;top:559px;font-size:16px;line-height:18px;color:#424242;font-weight:bold;letter-spacing:-0.17px;">Ctry</span>
<svg class="abs" style="left:1316px;top:561px" width="8" height="15" viewBox="0 0 8 15"><path d="M4 .8L7.600 6H.4z" fill="#dedede"/><path d="M4 14.200L7.600 9H.4z" fill="#dedede"/></svg>
<span id="f118" class="t " style="left:1347.5px;top:559px;font-size:16px;line-height:18px;color:#424242;font-weight:bold;letter-spacing:0.09px;">Act.</span>
<svg class="abs" style="left:1382.5px;top:561px" width="8" height="15" viewBox="0 0 8 15"><path d="M4 .8L7.600 6H.4z" fill="#dedede"/><path d="M4 14.200L7.600 9H.4z" fill="#dedede"/></svg>
<span id="f119" class="t " style="left:1414px;top:559px;font-size:16px;line-height:18px;color:#424242;font-weight:bold;letter-spacing:-0.25px;">Hotel</span>
<svg class="abs" style="left:1458.5px;top:561px" width="8" height="15" viewBox="0 0 8 15"><path d="M4 .8L7.600 6H.4z" fill="#dedede"/><path d="M4 14.200L7.600 9H.4z" fill="#dedede"/></svg>
<span id="f120" class="t " style="left:1490px;top:559px;font-size:16px;line-height:18px;color:#424242;font-weight:bold;letter-spacing:-0.10px;">Paid</span>
<svg class="abs" style="left:1528.5px;top:561px" width="8" height="15" viewBox="0 0 8 15"><path d="M4 .8L7.600 6H.4z" fill="#dedede"/><path d="M4 14.200L7.600 9H.4z" fill="#dedede"/></svg>
<span id="f121" class="t " style="left:1560px;top:559px;font-size:16px;line-height:18px;color:#424242;font-weight:bold;">Pay Count</span>
<svg class="abs" style="left:1644px;top:561px" width="8" height="15" viewBox="0 0 8 15"><path d="M4 .8L7.600 6H.4z" fill="#dedede"/><path d="M4 14.200L7.600 9H.4z" fill="#dedede"/></svg>
<span id="f122" class="t " style="left:1675px;top:559px;font-size:16px;line-height:18px;color:#424242;font-weight:bold;letter-spacing:-0.06px;">Pay Code</span>
<svg class="abs" style="left:1752.5px;top:561px" width="8" height="15" viewBox="0 0 8 15"><path d="M4 .8L7.600 6H.4z" fill="#dedede"/><path d="M4 14.200L7.600 9H.4z" fill="#dedede"/></svg>
<span id="f123" class="t " style="left:1790.5px;top:559px;font-size:16px;line-height:18px;color:#424242;font-weight:bold;letter-spacing:-0.11px;">Actions</span>
<div class="abs" style="left:269px;top:593px;width:1597px;height:1px;background:#111"></div>
<div class="tr" style="top:594px;background:#f9f9f9"><div class="sc" style="background:#f1f1f1"></div><div class="cb"></div></div>
<span id="f124" class="t " style="left:373px;top:600.5px;font-size:16px;line-height:18px;color:#e68a48;letter-spacing:0.15px;">5371100</span>
<span id="f125" class="t " style="left:456px;top:600.5px;font-size:16px;line-height:18px;color:#424242;letter-spacing:-0.03px;">3023</span>
<span id="f126" class="t " style="left:650px;top:601.3px;font-size:16px;line-height:18px;color:#424242;letter-spacing:-0.31px;">Ronny</span>
<span id="f127" class="t " style="left:1105px;top:600.5px;font-size:16px;line-height:18px;color:#424242;">Andorra</span>
<span id="f128" class="t " style="left:1276px;top:600.5px;font-size:16px;line-height:18px;color:#424242;letter-spacing:0.15px;">and</span>
<span id="f129" class="t " style="left:1344px;top:601.1px;font-size:16px;line-height:18px;color:#e68a48;">0</span>
<svg class="abs" style="left:1359px;top:604px" width="18" height="16" viewBox="0 0 18 16"><g transform="translate(9 8) scale(.9) rotate(45) translate(-9 -8)"><path d="M6 -1.800h6v2.600h-6z" fill="#f26f22"/><path d="M6 1.800h6v9.700l-3 4.800-3-4.800z" fill="#f26f22"/><path d="M6 11.200h6" stroke="#fbd9c0" stroke-width=".9"/></g></svg>
<span id="f130" class="t " style="left:1410px;top:600.5px;font-size:16px;line-height:18px;color:#424242;">0</span>
<span id="f131" class="t " style="left:1486px;top:600.5px;font-size:16px;line-height:18px;color:#424242;letter-spacing:-0.05px;">0.00</span>
<span id="f132" class="t " style="left:1556px;top:600.5px;font-size:16px;line-height:18px;color:#424242;">0</span>
<span id="f133" class="t " style="left:1782px;top:600.5px;font-size:16px;line-height:18px;color:#e68a48;letter-spacing:0.14px;">Edit</span>
<div class="tr" style="top:628px;background:#fff"><div class="sc" style="background:#fafafa"></div><div class="cb"></div></div>
<span id="f134" class="t " style="left:373px;top:634.5px;font-size:16px;line-height:18px;color:#e68a48;letter-spacing:-0.05px;">5371098</span>
<span id="f135" class="t " style="left:456px;top:634.5px;font-size:16px;line-height:18px;color:#424242;letter-spacing:-0.03px;">3022</span>
<span id="f136" class="t " style="left:650px;top:635.3px;font-size:16px;line-height:18px;color:#424242;letter-spacing:-0.31px;">Ronny</span>
<span id="f137" class="t " style="left:1105px;top:634.5px;font-size:16px;line-height:18px;color:#424242;">Andorra</span>
<span id="f138" class="t " style="left:1276px;top:634.5px;font-size:16px;line-height:18px;color:#424242;letter-spacing:0.15px;">and</span>
<span id="f139" class="t " style="left:1344px;top:635.1px;font-size:16px;line-height:18px;color:#e68a48;">0</span>
<svg class="abs" style="left:1359px;top:638px" width="18" height="16" viewBox="0 0 18 16"><g transform="translate(9 8) scale(.9) rotate(45) translate(-9 -8)"><path d="M6 -1.800h6v2.600h-6z" fill="#f26f22"/><path d="M6 1.800h6v9.700l-3 4.800-3-4.800z" fill="#f26f22"/><path d="M6 11.200h6" stroke="#fbd9c0" stroke-width=".9"/></g></svg>
<span id="f140" class="t " style="left:1410px;top:634.5px;font-size:16px;line-height:18px;color:#424242;">0</span>
<span id="f141" class="t " style="left:1486px;top:634.5px;font-size:16px;line-height:18px;color:#424242;letter-spacing:-0.05px;">0.00</span>
<span id="f142" class="t " style="left:1556px;top:634.5px;font-size:16px;line-height:18px;color:#424242;">0</span>
<span id="f143" class="t " style="left:1782px;top:634.5px;font-size:16px;line-height:18px;color:#e68a48;letter-spacing:0.14px;">Edit</span>
<div class="tr" style="top:662px;background:#f9f9f9"><div class="sc" style="background:#f1f1f1"></div><div class="cb"></div></div>
<span id="f144" class="t " style="left:373px;top:668.5px;font-size:16px;line-height:18px;color:#e68a48;letter-spacing:-0.05px;">5371091</span>
<span id="f145" class="t " style="left:456px;top:668.5px;font-size:16px;line-height:18px;color:#424242;letter-spacing:-0.03px;">3021</span>
<span id="f146" class="t " style="left:650px;top:669.3px;font-size:16px;line-height:18px;color:#424242;letter-spacing:-0.31px;">Ronny</span>
<span id="f147" class="t " style="left:1105px;top:668.5px;font-size:16px;line-height:18px;color:#424242;">Andorra</span>
<span id="f148" class="t " style="left:1276px;top:668.5px;font-size:16px;line-height:18px;color:#424242;letter-spacing:0.15px;">and</span>
<span id="f149" class="t " style="left:1344px;top:669.1px;font-size:16px;line-height:18px;color:#e68a48;">0</span>
<svg class="abs" style="left:1359px;top:672px" width="18" height="16" viewBox="0 0 18 16"><g transform="translate(9 8) scale(.9) rotate(45) translate(-9 -8)"><path d="M6 -1.800h6v2.600h-6z" fill="#f26f22"/><path d="M6 1.800h6v9.700l-3 4.800-3-4.800z" fill="#f26f22"/><path d="M6 11.200h6" stroke="#fbd9c0" stroke-width=".9"/></g></svg>
<span id="f150" class="t " style="left:1410px;top:668.5px;font-size:16px;line-height:18px;color:#424242;">0</span>
<span id="f151" class="t " style="left:1486px;top:668.5px;font-size:16px;line-height:18px;color:#424242;letter-spacing:-0.05px;">0.00</span>
<span id="f152" class="t " style="left:1556px;top:668.5px;font-size:16px;line-height:18px;color:#424242;">0</span>
<span id="f153" class="t " style="left:1782px;top:668.5px;font-size:16px;line-height:18px;color:#e68a48;letter-spacing:0.14px;">Edit</span>
<div class="tr" style="top:696px;background:#fff"><div class="sc" style="background:#fafafa"></div><div class="cb"></div></div>
<span id="f154" class="t " style="left:373px;top:702.5px;font-size:16px;line-height:18px;color:#e68a48;letter-spacing:-0.05px;">5367687</span>
<span id="f155" class="t " style="left:456px;top:702.5px;font-size:16px;line-height:18px;color:#424242;letter-spacing:-0.03px;">3018</span>
<span id="f156" class="t " style="left:650px;top:703.3px;font-size:16px;line-height:18px;color:#424242;letter-spacing:-0.08px;">Bryand the fir…</span>
<span id="f157" class="t " style="left:1105px;top:702.5px;font-size:16px;line-height:18px;color:#424242;">Andorra</span>
<span id="f158" class="t " style="left:1276px;top:702.5px;font-size:16px;line-height:18px;color:#424242;letter-spacing:0.15px;">and</span>
<span id="f159" class="t " style="left:1344px;top:703.1px;font-size:16px;line-height:18px;color:#e68a48;">0</span>
<svg class="abs" style="left:1359px;top:706px" width="18" height="16" viewBox="0 0 18 16"><g transform="translate(9 8) scale(.9) rotate(45) translate(-9 -8)"><path d="M6 -1.800h6v2.600h-6z" fill="#f26f22"/><path d="M6 1.800h6v9.700l-3 4.800-3-4.800z" fill="#f26f22"/><path d="M6 11.200h6" stroke="#fbd9c0" stroke-width=".9"/></g></svg>
<span id="f160" class="t " style="left:1410px;top:702.5px;font-size:16px;line-height:18px;color:#424242;">0</span>
<span id="f161" class="t " style="left:1486px;top:702.5px;font-size:16px;line-height:18px;color:#424242;letter-spacing:-0.05px;">0.00</span>
<span id="f162" class="t " style="left:1556px;top:702.5px;font-size:16px;line-height:18px;color:#424242;">0</span>
<span id="f163" class="t " style="left:1782px;top:702.5px;font-size:16px;line-height:18px;color:#e68a48;letter-spacing:0.14px;">Edit</span>
<div class="tr" style="top:730px;background:#f9f9f9"><div class="sc" style="background:#f1f1f1"></div><div class="cb"></div></div>
<span id="f164" class="t " style="left:373px;top:736.5px;font-size:16px;line-height:18px;color:#e68a48;letter-spacing:-0.05px;">5364328</span>
<span id="f165" class="t " style="left:456px;top:736.5px;font-size:16px;line-height:18px;color:#424242;letter-spacing:-0.03px;">3008</span>
<span id="f166" class="t " style="left:1344px;top:737.1px;font-size:16px;line-height:18px;color:#e68a48;">0</span>
<svg class="abs" style="left:1359px;top:740px" width="18" height="16" viewBox="0 0 18 16"><g transform="translate(9 8) scale(.9) rotate(45) translate(-9 -8)"><path d="M6 -1.800h6v2.600h-6z" fill="#f26f22"/><path d="M6 1.800h6v9.700l-3 4.800-3-4.800z" fill="#f26f22"/><path d="M6 11.200h6" stroke="#fbd9c0" stroke-width=".9"/></g></svg>
<span id="f167" class="t " style="left:1410px;top:736.5px;font-size:16px;line-height:18px;color:#424242;">0</span>
<span id="f168" class="t " style="left:1486px;top:736.5px;font-size:16px;line-height:18px;color:#424242;letter-spacing:-0.05px;">0.00</span>
<span id="f169" class="t " style="left:1556px;top:736.5px;font-size:16px;line-height:18px;color:#424242;">0</span>
<span id="f170" class="t " style="left:1782px;top:736.5px;font-size:16px;line-height:18px;color:#e68a48;letter-spacing:0.14px;">Edit</span>
<div class="tr" style="top:764px;background:#ffdcc6"><div class="sc" style="background:#ffdcc6"></div><div class="cb"></div></div>
<span id="f171" class="t " style="left:373px;top:770.5px;font-size:16px;line-height:18px;color:#e68a48;letter-spacing:-0.05px;">5361374</span>
<span id="f172" class="t " style="left:456px;top:770.5px;font-size:16px;line-height:18px;color:#424242;letter-spacing:-0.03px;">3006</span>
<span id="f173" class="t " style="left:650px;top:771.3px;font-size:16px;line-height:18px;color:#424242;letter-spacing:-0.08px;">Bryand the fir…</span>
<span id="f174" class="t " style="left:1105px;top:770.5px;font-size:16px;line-height:18px;color:#424242;">Andorra</span>
<span id="f175" class="t " style="left:1276px;top:770.5px;font-size:16px;line-height:18px;color:#424242;letter-spacing:0.15px;">and</span>
<span id="f176" class="t " style="left:1344px;top:771.1px;font-size:16px;line-height:18px;color:#e68a48;">1</span>
<svg class="abs" style="left:1359px;top:774px" width="18" height="16" viewBox="0 0 18 16"><g transform="translate(9 8) scale(.9) rotate(45) translate(-9 -8)"><path d="M6 -1.800h6v2.600h-6z" fill="#f26f22"/><path d="M6 1.800h6v9.700l-3 4.800-3-4.800z" fill="#f26f22"/><path d="M6 11.200h6" stroke="#fbd9c0" stroke-width=".9"/></g></svg>
<span id="f177" class="t " style="left:1410px;top:770.5px;font-size:16px;line-height:18px;color:#424242;">0</span>
<span id="f178" class="t " style="left:1486px;top:770.5px;font-size:16px;line-height:18px;color:#424242;letter-spacing:-0.05px;">0.00</span>
<span id="f179" class="t " style="left:1556px;top:770.5px;font-size:16px;line-height:18px;color:#424242;">0</span>
<span id="f180" class="t " style="left:1782px;top:770.5px;font-size:16px;line-height:18px;color:#e68a48;letter-spacing:0.14px;">Edit</span>
<div class="tr" style="top:798px;background:#f9f9f9"><div class="sc" style="background:#f1f1f1"></div><div class="cb"></div></div>
<span id="f181" class="t " style="left:373px;top:804.5px;font-size:16px;line-height:18px;color:#e68a48;letter-spacing:-0.05px;">5340974</span>
<span id="f182" class="t " style="left:456px;top:804.5px;font-size:16px;line-height:18px;color:#424242;letter-spacing:-0.03px;">3002</span>
<span id="f183" class="t " style="left:650px;top:805.3px;font-size:16px;line-height:18px;color:#424242;">Zelneruka</span>
<span id="f184" class="t " style="left:836px;top:805.3px;font-size:16px;line-height:18px;color:#424242;letter-spacing:-0.06px;">Linaz</span>
<span id="f185" class="t " style="left:1344px;top:805.1px;font-size:16px;line-height:18px;color:#e68a48;">0</span>
<svg class="abs" style="left:1359px;top:808px" width="18" height="16" viewBox="0 0 18 16"><g transform="translate(9 8) scale(.9) rotate(45) translate(-9 -8)"><path d="M6 -1.800h6v2.600h-6z" fill="#f26f22"/><path d="M6 1.800h6v9.700l-3 4.800-3-4.800z" fill="#f26f22"/><path d="M6 11.200h6" stroke="#fbd9c0" stroke-width=".9"/></g></svg>
<span id="f186" class="t " style="left:1410px;top:804.5px;font-size:16px;line-height:18px;color:#424242;">0</span>
<span id="f187" class="t " style="left:1486px;top:804.5px;font-size:16px;line-height:18px;color:#424242;letter-spacing:-0.05px;">0.00</span>
<span id="f188" class="t " style="left:1556px;top:804.5px;font-size:16px;line-height:18px;color:#424242;">0</span>
<span id="f189" class="t " style="left:1782px;top:804.5px;font-size:16px;line-height:18px;color:#e68a48;letter-spacing:0.14px;">Edit</span>
<div class="tr" style="top:832px;background:#fff"><div class="sc" style="background:#fafafa"></div><div class="cb"></div></div>
<span id="f190" class="t " style="left:373px;top:838.5px;font-size:16px;line-height:18px;color:#e68a48;letter-spacing:-0.05px;">5340973</span>
<span id="f191" class="t " style="left:456px;top:838.5px;font-size:16px;line-height:18px;color:#424242;letter-spacing:-0.03px;">3001</span>
<span id="f192" class="t " style="left:650px;top:839.3px;font-size:16px;line-height:18px;color:#424242;letter-spacing:-0.16px;">Zada</span>
<span id="f193" class="t " style="left:836px;top:839.3px;font-size:16px;line-height:18px;color:#424242;letter-spacing:-0.08px;">juan</span>
<span id="f194" class="t " style="left:984px;top:839.3px;font-size:16px;line-height:18px;color:#424242;">Support</span>
<span id="f195" class="t " style="left:1344px;top:839.1px;font-size:16px;line-height:18px;color:#e68a48;">0</span>
<svg class="abs" style="left:1359px;top:842px" width="18" height="16" viewBox="0 0 18 16"><g transform="translate(9 8) scale(.9) rotate(45) translate(-9 -8)"><path d="M6 -1.800h6v2.600h-6z" fill="#f26f22"/><path d="M6 1.800h6v9.700l-3 4.800-3-4.800z" fill="#f26f22"/><path d="M6 11.200h6" stroke="#fbd9c0" stroke-width=".9"/></g></svg>
<span id="f196" class="t " style="left:1410px;top:838.5px;font-size:16px;line-height:18px;color:#424242;">0</span>
<span id="f197" class="t " style="left:1486px;top:838.5px;font-size:16px;line-height:18px;color:#424242;letter-spacing:-0.05px;">0.00</span>
<span id="f198" class="t " style="left:1556px;top:838.5px;font-size:16px;line-height:18px;color:#424242;">0</span>
<span id="f199" class="t " style="left:1782px;top:838.5px;font-size:16px;line-height:18px;color:#e68a48;letter-spacing:0.14px;">Edit</span>
<div class="tr" style="top:866px;background:#f9f9f9"><div class="sc" style="background:#f1f1f1"></div><div class="cb"></div></div>
<span id="f200" class="t " style="left:373px;top:872.5px;font-size:16px;line-height:18px;color:#e68a48;letter-spacing:-0.05px;">5340972</span>
<span id="f201" class="t " style="left:456px;top:872.5px;font-size:16px;line-height:18px;color:#424242;letter-spacing:-0.03px;">3000</span>
<span id="f202" class="t " style="left:650px;top:873.3px;font-size:16px;line-height:18px;color:#424242;">Cepeda</span>
<span id="f203" class="t " style="left:836px;top:873.3px;font-size:16px;line-height:18px;color:#424242;letter-spacing:0.06px;">Reynaldo</span>
<span id="f204" class="t " style="left:1344px;top:873.1px;font-size:16px;line-height:18px;color:#e68a48;">0</span>
<svg class="abs" style="left:1359px;top:876px" width="18" height="16" viewBox="0 0 18 16"><g transform="translate(9 8) scale(.9) rotate(45) translate(-9 -8)"><path d="M6 -1.800h6v2.600h-6z" fill="#f26f22"/><path d="M6 1.800h6v9.700l-3 4.800-3-4.800z" fill="#f26f22"/><path d="M6 11.200h6" stroke="#fbd9c0" stroke-width=".9"/></g></svg>
<span id="f205" class="t " style="left:1410px;top:872.5px;font-size:16px;line-height:18px;color:#424242;">0</span>
<span id="f206" class="t " style="left:1486px;top:872.5px;font-size:16px;line-height:18px;color:#424242;letter-spacing:-0.05px;">0.00</span>
<span id="f207" class="t " style="left:1556px;top:872.5px;font-size:16px;line-height:18px;color:#424242;">0</span>
<span id="f208" class="t " style="left:1782px;top:872.5px;font-size:16px;line-height:18px;color:#e68a48;letter-spacing:0.14px;">Edit</span>
<div class="tr" style="top:900px;background:#fff"><div class="sc" style="background:#fafafa"></div><div class="cb"></div></div>
<span id="f209" class="t " style="left:373px;top:906.5px;font-size:16px;line-height:18px;color:#e68a48;letter-spacing:-0.05px;">5340971</span>
<span id="f210" class="t " style="left:456px;top:906.5px;font-size:16px;line-height:18px;color:#424242;letter-spacing:-0.03px;">2999</span>
<span id="f211" class="t " style="left:650px;top:907.3px;font-size:16px;line-height:18px;color:#424242;letter-spacing:-0.06px;">Cepeda- DONT D…</span>
<span id="f212" class="t " style="left:836px;top:907.3px;font-size:16px;line-height:18px;color:#424242;letter-spacing:0.06px;">Dereck</span>
<span id="f213" class="t " style="left:1344px;top:907.1px;font-size:16px;line-height:18px;color:#e68a48;">0</span>
<svg class="abs" style="left:1359px;top:910px" width="18" height="16" viewBox="0 0 18 16"><g transform="translate(9 8) scale(.9) rotate(45) translate(-9 -8)"><path d="M6 -1.800h6v2.600h-6z" fill="#f26f22"/><path d="M6 1.800h6v9.700l-3 4.800-3-4.800z" fill="#f26f22"/><path d="M6 11.200h6" stroke="#fbd9c0" stroke-width=".9"/></g></svg>
<span id="f214" class="t " style="left:1410px;top:906.5px;font-size:16px;line-height:18px;color:#424242;">0</span>
<span id="f215" class="t " style="left:1486px;top:906.5px;font-size:16px;line-height:18px;color:#424242;letter-spacing:-0.05px;">0.00</span>
<span id="f216" class="t " style="left:1556px;top:906.5px;font-size:16px;line-height:18px;color:#424242;">0</span>
<span id="f217" class="t " style="left:1782px;top:906.5px;font-size:16px;line-height:18px;color:#e68a48;letter-spacing:0.14px;">Edit</span>
<div class="tr" style="top:934px;background:#f9f9f9"><div class="sc" style="background:#f1f1f1"></div><div class="cb"></div></div>
<span id="f218" class="t " style="left:373px;top:940.5px;font-size:16px;line-height:18px;color:#e68a48;letter-spacing:-0.05px;">5340970</span>
<span id="f219" class="t " style="left:456px;top:940.5px;font-size:16px;line-height:18px;color:#424242;letter-spacing:-0.03px;">2998</span>
<span id="f220" class="t " style="left:650px;top:941.3px;font-size:16px;line-height:18px;color:#424242;">Cepeda</span>
<span id="f221" class="t " style="left:836px;top:941.3px;font-size:16px;line-height:18px;color:#424242;letter-spacing:0.06px;">Bryand</span>
<span id="f222" class="t " style="left:1344px;top:941.1px;font-size:16px;line-height:18px;color:#e68a48;">0</span>
<svg class="abs" style="left:1359px;top:944px" width="18" height="16" viewBox="0 0 18 16"><g transform="translate(9 8) scale(.9) rotate(45) translate(-9 -8)"><path d="M6 -1.800h6v2.600h-6z" fill="#f26f22"/><path d="M6 1.800h6v9.700l-3 4.800-3-4.800z" fill="#f26f22"/><path d="M6 11.200h6" stroke="#fbd9c0" stroke-width=".9"/></g></svg>
<span id="f223" class="t " style="left:1410px;top:940.5px;font-size:16px;line-height:18px;color:#424242;">0</span>
<span id="f224" class="t " style="left:1486px;top:940.5px;font-size:16px;line-height:18px;color:#424242;letter-spacing:-0.05px;">0.00</span>
<span id="f225" class="t " style="left:1556px;top:940.5px;font-size:16px;line-height:18px;color:#424242;">0</span>
<span id="f226" class="t " style="left:1782px;top:940.5px;font-size:16px;line-height:18px;color:#e68a48;letter-spacing:0.14px;">Edit</span>
<div class="tr" style="top:968px;background:#fff"><div class="sc" style="background:#fafafa"></div><div class="cb"></div></div>
<span id="f227" class="t " style="left:373px;top:974.5px;font-size:16px;line-height:18px;color:#e68a48;letter-spacing:-0.05px;">5340969</span>
<span id="f228" class="t " style="left:456px;top:974.5px;font-size:16px;line-height:18px;color:#424242;letter-spacing:-0.03px;">2997</span>
<span id="f229" class="t " style="left:650px;top:975.3px;font-size:16px;line-height:18px;color:#424242;letter-spacing:-0.10px;">BC JAH First N…</span>
<span id="f230" class="t " style="left:836px;top:975.3px;font-size:16px;line-height:18px;color:#424242;">Angel</span>
<span id="f231" class="t " style="left:1105px;top:974.5px;font-size:16px;line-height:18px;color:#424242;">Andorra</span>
<span id="f232" class="t " style="left:1276px;top:974.5px;font-size:16px;line-height:18px;color:#424242;letter-spacing:0.15px;">and</span>
<span id="f233" class="t " style="left:1344px;top:975.1px;font-size:16px;line-height:18px;color:#e68a48;">0</span>
<svg class="abs" style="left:1359px;top:978px" width="18" height="16" viewBox="0 0 18 16"><g transform="translate(9 8) scale(.9) rotate(45) translate(-9 -8)"><path d="M6 -1.800h6v2.600h-6z" fill="#f26f22"/><path d="M6 1.800h6v9.700l-3 4.800-3-4.800z" fill="#f26f22"/><path d="M6 11.200h6" stroke="#fbd9c0" stroke-width=".9"/></g></svg>
<span id="f234" class="t " style="left:1410px;top:974.5px;font-size:16px;line-height:18px;color:#424242;">0</span>
<span id="f235" class="t " style="left:1486px;top:974.5px;font-size:16px;line-height:18px;color:#424242;letter-spacing:-0.05px;">0.00</span>
<span id="f236" class="t " style="left:1556px;top:974.5px;font-size:16px;line-height:18px;color:#424242;">0</span>
<span id="f237" class="t " style="left:1782px;top:974.5px;font-size:16px;line-height:18px;color:#e68a48;letter-spacing:0.14px;">Edit</span>
<div class="tr" style="top:1002px;background:#f9f9f9"><div class="sc" style="background:#f1f1f1"></div><div class="cb"></div></div>
<span id="f238" class="t " style="left:373px;top:1008.5px;font-size:16px;line-height:18px;color:#e68a48;letter-spacing:-0.05px;">5339960</span>
<span id="f239" class="t " style="left:456px;top:1008.5px;font-size:16px;line-height:18px;color:#424242;letter-spacing:-0.03px;">2996</span>
<span id="f240" class="t " style="left:650px;top:1009.3px;font-size:16px;line-height:18px;color:#424242;letter-spacing:0.02px;">ReynaldoBulk</span>
<span id="f241" class="t " style="left:836px;top:1009.3px;font-size:16px;line-height:18px;color:#424242;">CepUpload</span>
<span id="f242" class="t " style="left:1105px;top:1008.5px;font-size:16px;line-height:18px;color:#424242;letter-spacing:-0.23px;">UK</span>
<span id="f243" class="t " style="left:1276px;top:1008.5px;font-size:16px;line-height:18px;color:#424242;letter-spacing:-0.23px;">UK</span>
<span id="f244" class="t " style="left:1344px;top:1009.1px;font-size:16px;line-height:18px;color:#e68a48;">0</span>
<svg class="abs" style="left:1359px;top:1012px" width="18" height="16" viewBox="0 0 18 16"><g transform="translate(9 8) scale(.9) rotate(45) translate(-9 -8)"><path d="M6 -1.800h6v2.600h-6z" fill="#f26f22"/><path d="M6 1.800h6v9.700l-3 4.800-3-4.800z" fill="#f26f22"/><path d="M6 11.200h6" stroke="#fbd9c0" stroke-width=".9"/></g></svg>
<span id="f245" class="t " style="left:1410px;top:1008.5px;font-size:16px;line-height:18px;color:#424242;">0</span>
<span id="f246" class="t " style="left:1486px;top:1008.5px;font-size:16px;line-height:18px;color:#424242;letter-spacing:-0.05px;">0.00</span>
<span id="f247" class="t " style="left:1556px;top:1008.5px;font-size:16px;line-height:18px;color:#424242;">0</span>
<span id="f248" class="t " style="left:1782px;top:1008.5px;font-size:16px;line-height:18px;color:#e68a48;letter-spacing:0.14px;">Edit</span>
<div class="abs" style="left:1867px;top:594px;width:17px;height:438px;background:#f1f1f1"></div>
<div class="abs" style="left:1869px;top:594px;width:13px;height:174px;background:#c1c1c1"></div>
<div class="abs" style="left:1865px;top:563px;width:38px;height:119px;background:#fa6e10;border-radius:4px 0 0 2px;box-shadow:-1px 0 2px rgba(249,106,20,.35)"></div>
<div class="abs" style="left:1850px;top:605px;width:70px;height:18px;transform:rotate(-90deg);transform-origin:50% 50%;text-align:center"><span id="f249" class="t " style="left:0px;top:0px;font-size:14.5px;line-height:18px;color:#fff;font-weight:bold;position:static;display:inline-block;letter-spacing:0.30px;">Feedback</span></div>
<svg class="abs" style="left:1875.500px;top:654.500px" width="16" height="18" viewBox="0 0 16 18"><g transform="rotate(-90 8 9)"><path d="M7 4.500l1.700 3.500 3.800.5-2.800 2.600.7 3.800L7 13.100 3.600 14.900l.7-3.800L1.500 8.500l3.800-.5z" fill="none" stroke="#fff" stroke-width="1.500" stroke-linejoin="round"/><circle cx="13.500" cy="4" r=".9" fill="#fff"/><circle cx="15" cy="7.500" r=".7" fill="#fff"/></g></svg>
<div class="abs" style="left:1903px;top:213px;width:17px;height:819px;background:#f1f1f1"></div>
<div class="abs" style="left:1905px;top:230px;width:13px;height:433px;background:#c1c1c1"></div>
<svg class="abs" style="left:1907px;top:219px" width="9" height="6" viewBox="0 0 9 6"><path d="M4.500 .8L8.300 5H.7z" fill="#a3a3a3"/></svg>
<svg class="abs" style="left:1907px;top:1020px" width="9" height="6" viewBox="0 0 9 6"><path d="M4.500 5.200L8.300 1H.7z" fill="#505050"/></svg>
<div class="abs" style="left:519.500px;top:472.500px;width:72px;height:72px;border-radius:50%;border:3.800px solid rgba(234,240,8,.9)"></div>
<svg class="abs" style="left:552px;top:500px" width="9" height="18" viewBox="0 0 9 18"><path d="M1 .7h7M4.500 .7v16.600M2.500 17.300h4" stroke="#222" stroke-width="1.100" fill="none"/></svg>
</body>
</html>
